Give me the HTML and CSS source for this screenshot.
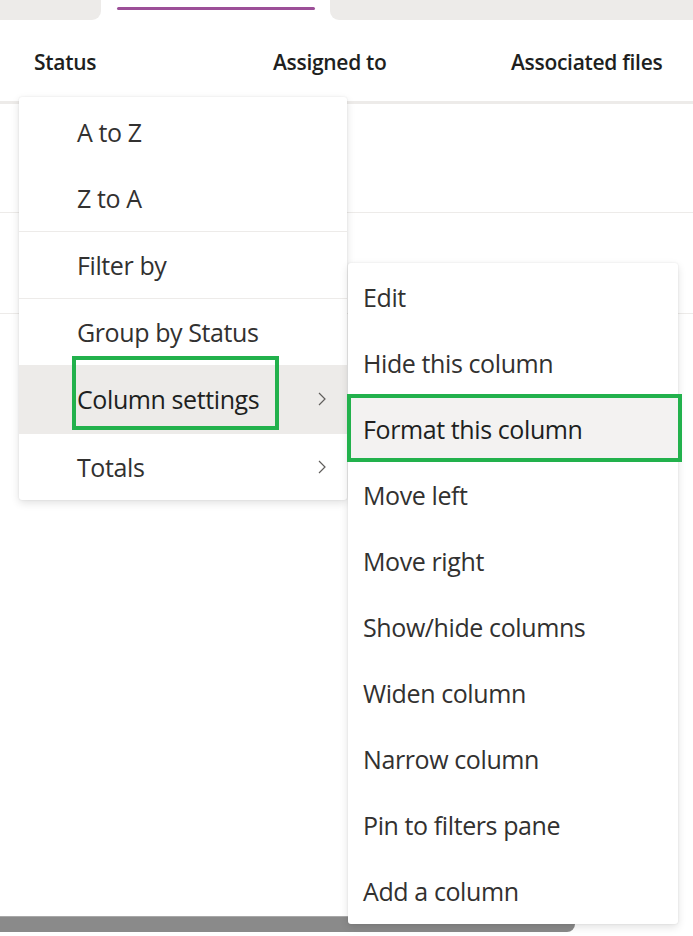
FILE: index.html
```html
<!DOCTYPE html>
<html lang="en">
<head>
<meta charset="utf-8">
<title>Column menu</title>
<link rel="stylesheet" href="styles.css">
</head>
<body>
<div class="page">
  <div class="tabs">
    <div class="tab-gray tab-left"></div>
    <div class="tab-active"><span class="tab-indicator"></span></div>
    <div class="tab-gray tab-right"></div>
  </div>
  <div class="header">
    <div class="col col-status">Status</div>
    <div class="col col-assigned">Assigned to</div>
    <div class="col col-files">Associated files</div>
  </div>
  <div class="row row-1"></div>
  <div class="row row-2"></div>
  <div class="spacer"></div>
  <div class="scrollbar"><div class="thumb"></div></div>

  <div class="menu main-menu">
    <div class="item">A to Z</div>
    <div class="item">Z to A</div>
    <div class="divider"></div>
    <div class="item">Filter by</div>
    <div class="divider"></div>
    <div class="item">Group by Status</div>
    <div class="item item-active">
      <span class="label boxed-left">Column settings</span>
      <svg class="chev" viewBox="0 0 10 16" width="10" height="16"><path d="M2 2 L8 8 L2 14" fill="none" stroke="#605e5c" stroke-width="1.2"/></svg>
    </div>
    <div class="item">
      <span class="label">Totals</span>
      <svg class="chev" viewBox="0 0 10 16" width="10" height="16"><path d="M2 2 L8 8 L2 14" fill="none" stroke="#605e5c" stroke-width="1.2"/></svg>
    </div>
  </div>

  <div class="menu sub-menu">
    <div class="item">Edit</div>
    <div class="item">Hide this column</div>
    <div class="item item-hover boxed-right">Format this column</div>
    <div class="item">Move left</div>
    <div class="item">Move right</div>
    <div class="item">Show/hide columns</div>
    <div class="item">Widen column</div>
    <div class="item">Narrow column</div>
    <div class="item">Pin to filters pane</div>
    <div class="item">Add a column</div>
  </div>
</div>
</body>
</html>
```

FILE: styles.css
```css
* { box-sizing: border-box; }
html, body { margin: 0; padding: 0; background: #ffffff; }
body {
  font-family: "Open Sans", "Noto Sans", "Liberation Sans", sans-serif;
  color: #323130;
}
.page {
  position: relative;
  width: 693px;
  height: 936px;
  overflow: hidden;
  display: flex;
  flex-direction: column;
}
.tabs {
  display: flex;
  height: 20px;
  flex: 0 0 20px;
}
.tab-gray { background: #edebe9; }
.tab-left { width: 101px; border-bottom-right-radius: 9px; }
.tab-right { flex: 1; border-bottom-left-radius: 9px; }
.tab-active {
  width: 229px;
  padding: 7px 15px 0 16px;
}
.tab-indicator {
  display: block;
  height: 3px;
  border-radius: 2px;
  background: #9c4f98;
}
.header {
  display: flex;
  align-items: center;
  height: 84px;
  flex: 0 0 84px;
  border-bottom: 3px solid #edebe9;
  font-weight: 600;
  font-size: 21px;
  color: #201f1e;
  padding-top: 2px;
  letter-spacing: -0.3px;
}
.col-status { margin-left: 34px; width: 239px; }
.col-assigned { width: 238px; }
.row {
  border-bottom: 1px solid #edebe9;
}
.row-1 { height: 109px; flex: 0 0 109px; }
.row-2 { height: 101px; flex: 0 0 101px; }
.spacer { flex: 1; }
.scrollbar {
  height: 20px;
  flex: 0 0 20px;
}
.thumb {
  width: 575px;
  height: 16px;
  background: #8a8a8a;
  border-top: 1px solid #a8a8a8;
  border-radius: 0 8px 8px 0;
}

/* Menus */
.menu {
  position: absolute;
  background: #ffffff;
  border-radius: 3px;
  box-shadow: 0 0 2px rgba(0,0,0,0.10), 0 3px 8px rgba(0,0,0,0.12);
  font-size: 25px;
  letter-spacing: -0.4px;
  color: #323130;
}
.main-menu {
  left: 19px;
  top: 97px;
  width: 328px;
  padding-top: 2px;
}
.sub-menu {
  left: 348px;
  top: 263px;
  width: 330px;
  padding-top: 1px;
}
.item {
  position: relative;
  display: flex;
  align-items: center;
  height: 66px;
  padding-bottom: 1px;
}
.main-menu .item { padding-left: 58px; padding-right: 20px; }
.sub-menu .item { padding-left: 15px; }
.main-menu .label { margin-right: auto; }
.chev { flex: 0 0 auto; }
.divider {
  height: 1px;
  background: #edebe9;
}
.item-active {
  background: #edebe9;
  color: #201f1e;
  height: 69px;
}
.item-hover {
  background: #f3f2f1;
  color: #201f1e;
}
.boxed-left { position: relative; }
.boxed-left::after {
  content: "";
  position: absolute;
  left: -5px;
  right: -20px;
  top: -26px;
  bottom: -14px;
  border: 4px solid #22b14c;
}
.boxed-right::after {
  content: "";
  position: absolute;
  left: -1px;
  right: -4px;
  top: -2px;
  bottom: 0;
  border: 4px solid #22b14c;
}
```
